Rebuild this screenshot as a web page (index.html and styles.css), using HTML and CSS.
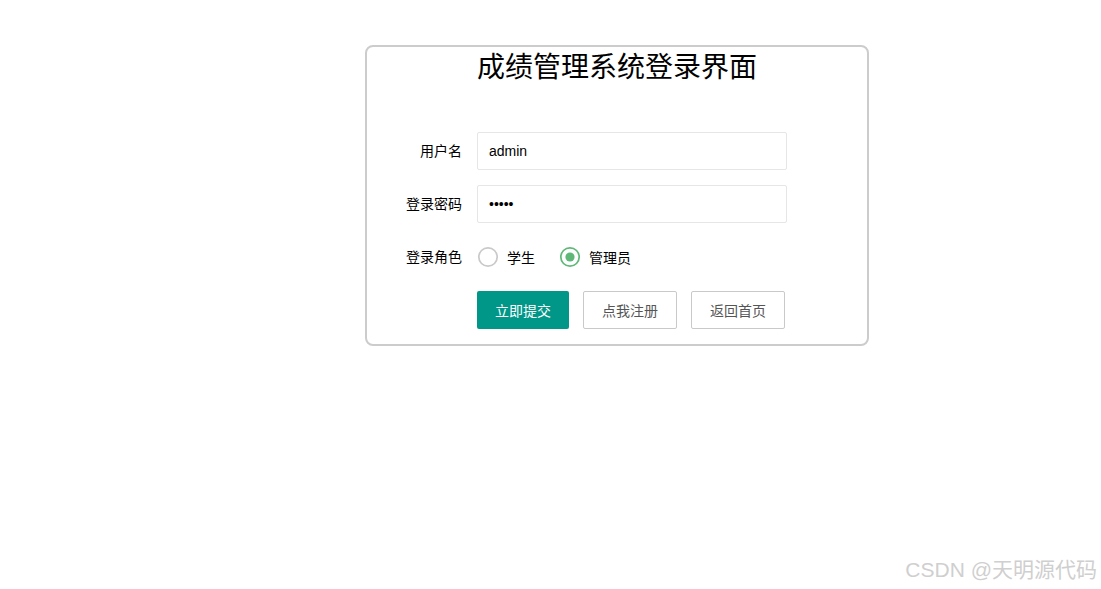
FILE: index.html
```html
<!DOCTYPE html>
<html lang="zh-CN">
<head>
<meta charset="utf-8">
<title>成绩管理系统登录界面</title>
<link rel="stylesheet" href="styles.css">
</head>
<body>
<div class="login-box">
  <h2 class="title">成绩管理系统登录界面</h2>
  <form class="form">
    <div class="form-item">
      <label class="label">用户名</label>
      <input class="input" type="text" value="admin">
    </div>
    <div class="form-item">
      <label class="label">登录密码</label>
      <input class="input" type="password" value="12345">
    </div>
    <div class="form-item">
      <label class="label">登录角色</label>
      <div class="radios">
        <div class="radio">
          <svg class="radio-icon" width="22" height="22" viewBox="0 0 22 22"><circle cx="11" cy="11" r="9.2" fill="none" stroke="#c9c9c9" stroke-width="1.7"/></svg>
          <span>学生</span>
        </div>
        <div class="radio">
          <svg class="radio-icon" width="22" height="22" viewBox="0 0 22 22"><circle cx="11" cy="11" r="9.2" fill="none" stroke="#5fb878" stroke-width="1.7"/><circle cx="11" cy="11" r="4.6" fill="#5fb878"/></svg>
          <span>管理员</span>
        </div>
      </div>
    </div>
    <div class="form-item">
      <span class="label"></span>
      <div class="btns">
        <button type="button" class="btn btn-primary">立即提交</button>
        <button type="button" class="btn">点我注册</button>
        <button type="button" class="btn">返回首页</button>
      </div>
    </div>
  </form>
</div>
<div class="watermark">CSDN @天明源代码</div>
</body>
</html>
```
FILE: styles.css
```css
html, body {
  margin: 0;
  padding: 0;
  background: #fff;
  font-family: "Liberation Sans", "Noto Sans CJK SC", sans-serif;
  font-size: 14px;
  color: #333;
}
body {
  width: 1101px;
  height: 589px;
  position: relative;
  overflow: hidden;
}
.login-box {
  box-sizing: border-box;
  width: 504px;
  height: 301px;
  margin: 45px 0 0 365px;
  border: 2px solid #cccccc;
  border-radius: 8px;
  padding-top: 0;
}
.title {
  margin: 0;
  text-align: center;
  font-family: "Noto Sans CJK SC", sans-serif;
  font-weight: normal;
  font-size: 28px;
  line-height: 36px;
  color: #000;
}
.form {
  margin-top: 49px;
}
.form-item {
  display: flex;
  align-items: center;
  height: 38px;
  margin-bottom: 15px;
}
.label {
  box-sizing: border-box;
  width: 110px;
  padding: 0 15px 3px;
  text-align: right;
  color: #000;
  font-family: "Noto Sans CJK SC", sans-serif;
  font-size: 14px;
}
.input {
  box-sizing: border-box;
  width: 310px;
  height: 38px;
  border: 1px solid #e6e6e6;
  border-radius: 2px;
  padding: 0 11px;
  font-family: "Liberation Sans", "Noto Sans CJK SC", sans-serif;
  font-size: 14px;
  color: #000;
  outline: none;
}
.radios {
  display: flex;
  align-items: center;
  gap: 24px;
}
.radio {
  display: flex;
  align-items: center;
  color: #000;
  font-family: "Noto Sans CJK SC", sans-serif;
}
.radio-icon {
  display: block;
  margin-right: 8px;
}
.btns {
  display: flex;
  gap: 14px;
}
.btn {
  box-sizing: border-box;
  height: 38px;
  padding: 0 18px;
  border: 1px solid #c9c9c9;
  border-radius: 2px;
  background: #fff;
  color: #555;
  font-family: "Noto Sans CJK SC", sans-serif;
  font-size: 14px;
  cursor: pointer;
}
.btn-primary {
  border: none;
  background: #009688;
  color: #fff;
}
.watermark {
  position: absolute;
  right: 4px;
  bottom: 6px;
  font-family: "Liberation Sans", "Noto Sans CJK SC", sans-serif;
  font-size: 21px;
  color: #cfcfcf;
}
```
